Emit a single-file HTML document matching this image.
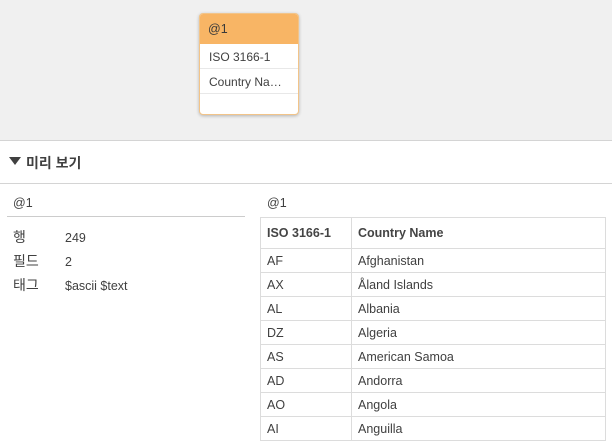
<!DOCTYPE html>
<html><head><meta charset="utf-8"><style>
*{margin:0;padding:0;box-sizing:border-box}
body{width:612px;height:440px;overflow:hidden;background:#fff;font-family:"Liberation Sans","Noto Sans CJK KR",sans-serif;color:#404040;font-size:12.5px;position:relative}
.top{position:absolute;left:0;top:0;width:612px;height:141px;background:#f0f0f0;border-bottom:1px solid #d4d4d4}
.card{position:absolute;left:199px;top:13px;width:100px;height:102px;background:#fff;border:1px solid #f2c489;border-radius:4px;box-shadow:0 1px 3px rgba(0,0,0,.25);overflow:hidden}
.card .h{height:30px;background:#f8b565;padding:8px 8px;color:#3a3a3a}
.card .r{height:25px;border-bottom:1px solid #e8e8e8;padding:6px 9px;white-space:nowrap;font-size:12px}
.bar{position:absolute;left:0;top:141px;width:612px;height:43px;border-bottom:1px solid #d4d4d4}
.bar span{position:absolute;left:26px;top:12px;font-size:14px;font-weight:bold;color:#404040}
.tri{position:absolute;left:9px;top:157px;width:0;height:0;border-left:6px solid transparent;border-right:6px solid transparent;border-top:8px solid #404040}
.t{position:absolute}
.k{font-size:14px}
table{position:absolute;left:260px;top:217px;width:346px;border-collapse:collapse}
td{border:1px solid #dcdcdc;height:24px;padding:0 6px;font-size:12.5px}
tr.hd td{height:31px;font-weight:bold;color:#444}
td:first-child{width:91px}
</style></head><body>
<div class="top">
<div class="card"><div class="h">@1</div><div class="r">ISO 3166-1</div><div class="r">Country Na…</div></div>
</div>
<div class="bar"><span>미리 보기</span></div>
<div class="tri"></div>
<div class="t" style="left:13px;top:196px">@1</div>
<div class="t" style="left:7px;top:216px;width:238px;border-top:1px solid #ccc"></div>
<div class="t k" style="left:13px;top:227px">행</div><div class="t" style="left:65px;top:231px">249</div>
<div class="t k" style="left:13px;top:251px">필드</div><div class="t" style="left:65px;top:255px">2</div>
<div class="t k" style="left:13px;top:275px">태그</div><div class="t" style="left:65px;top:279px">$ascii $text</div>
<div class="t" style="left:267px;top:196px">@1</div>
<table>
<tr class="hd"><td>ISO 3166-1</td><td>Country Name</td></tr>
<tr><td>AF</td><td>Afghanistan</td></tr>
<tr><td>AX</td><td>Åland Islands</td></tr>
<tr><td>AL</td><td>Albania</td></tr>
<tr><td>DZ</td><td>Algeria</td></tr>
<tr><td>AS</td><td>American Samoa</td></tr>
<tr><td>AD</td><td>Andorra</td></tr>
<tr><td>AO</td><td>Angola</td></tr>
<tr><td>AI</td><td>Anguilla</td></tr>
</table>
</body></html>
